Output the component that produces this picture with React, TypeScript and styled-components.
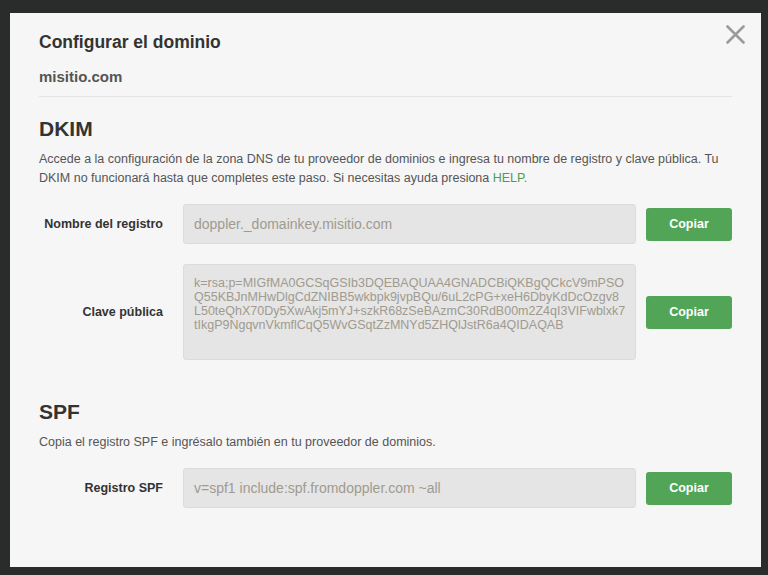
import React from 'react';
import styled, { createGlobalStyle } from 'styled-components';

interface TField {
  label: string;
  lines: string[];
  multiline?: boolean;
}

interface SFieldValueProps {
  $multiline?: boolean;
}

const dkimFields: TField[] = [
  { label: 'Nombre del registro', lines: ['doppler._domainkey.misitio.com'] },
  {
    label: 'Clave pública',
    multiline: true,
    lines: [
      'k=rsa;p=MIGfMA0GCSqGSIb3DQEBAQUAA4GNADCBiQKBgQCkcV9mPSO',
      'Q55KBJnMHwDlgCdZNIBB5wkbpk9jvpBQu/6uL2cPG+xeH6DbyKdDcOzgv8',
      'L50teQhX70Dy5XwAkj5mYJ+szkR68zSeBAzmC30RdB00m2Z4qI3VIFwblxk7',
      'tIkgP9NgqvnVkmflCqQ5WvGSqtZzMNYd5ZHQlJstR6a4QIDAQAB'
    ]
  }
];

const spfFields: TField[] = [
  { label: 'Registro SPF', lines: ['v=spf1 include:spf.fromdoppler.com ~all'] }
];

const FieldRow = ({ field }: { field: TField }) => (
  <SRow>
    <SLabel>{field.label}</SLabel>
    <SFieldValue $multiline={field.multiline}>
      {field.lines.map((line) => (
        <div key={line}>{line}</div>
      ))}
    </SFieldValue>
    <SCopyButton type="button">Copiar</SCopyButton>
  </SRow>
);

const App = () => {
  return (
    <>
      <GlobalStyle />
      <SOverlay>
        <SModal>
          <SClose type="button" aria-label="Cerrar">
            <svg width="19" height="19" viewBox="0 0 19 19">
              <path d="M1.5 1.5 L17.5 17.5 M17.5 1.5 L1.5 17.5" stroke="#9b9b9b" strokeWidth="2.6" strokeLinecap="round" />
            </svg>
          </SClose>

          <STitle>Configurar el dominio</STitle>
          <SDomain>misitio.com</SDomain>
          <SDivider />

          <SSection>
            <SSectionTitle>DKIM</SSectionTitle>
            <SDescription>
              Accede a la configuración de la zona DNS de tu proveedor de dominios e ingresa tu nombre de
              registro y clave pública. Tu DKIM no funcionará hasta que completes este paso. Si necesitas ayuda
              presiona <SHelp href="#">HELP.</SHelp>
            </SDescription>
            {dkimFields.map((field) => (
              <FieldRow key={field.label} field={field} />
            ))}
          </SSection>

          <SSection>
            <SSectionTitle>SPF</SSectionTitle>
            <SDescription>Copia el registro SPF e ingrésalo también en tu proveedor de dominios.</SDescription>
            {spfFields.map((field) => (
              <FieldRow key={field.label} field={field} />
            ))}
          </SSection>
        </SModal>
      </SOverlay>
    </>
  );
};

export default App;

const GlobalStyle = createGlobalStyle`
  html, body {
    margin: 0;
    padding: 0;
    background: #2a2b2b;
  }
  body {
    font-family: "Liberation Sans", Arial, Helvetica, sans-serif;
  }
`;

const SOverlay = styled.div`
  width: 768px;
  height: 575px;
  box-sizing: border-box;
  padding: 13px 7px 8px 10px;
  background: #2a2b2b;
  overflow: hidden;
`;

const SModal = styled.div`
  position: relative;
  width: 751px;
  height: 554px;
  box-sizing: border-box;
  padding: 19px 29px 0;
  background: #f6f6f6;
  display: flex;
  flex-direction: column;
`;

const SClose = styled.button`
  position: absolute;
  top: 12px;
  right: 16px;
  width: 19px;
  height: 19px;
  padding: 0;
  border: none;
  background: none;
  cursor: pointer;
  svg {
    display: block;
  }
`;

const STitle = styled.h2`
  margin: 0;
  font-size: 17.5px;
  line-height: 20px;
  font-weight: bold;
  color: #333;
`;

const SDomain = styled.div`
  margin-top: 16px;
  font-size: 15px;
  line-height: 18px;
  font-weight: bold;
  color: #555;
`;

const SDivider = styled.div`
  margin-top: 10px;
  height: 1px;
  background: #e4e4e4;
`;

const SSection = styled.section`
  display: flex;
  flex-direction: column;
  margin-top: 20px;
  & + & {
    margin-top: 40px;
  }
`;

const SSectionTitle = styled.h3`
  margin: 0;
  font-size: 21px;
  line-height: 24px;
  font-weight: bold;
  color: #333;
`;

const SDescription = styled.p`
  margin: 9px 0 16px;
  font-size: 12.5px;
  line-height: 19px;
  color: #555;
`;

const SHelp = styled.a`
  color: #4a9e4f;
  text-decoration: none;
`;

const SRow = styled.div`
  display: flex;
  align-items: center;
  & + & {
    margin-top: 20px;
  }
`;

const SLabel = styled.div`
  width: 124px;
  margin-right: 20px;
  text-align: right;
  font-size: 12.5px;
  font-weight: bold;
  color: #333;
`;

const SFieldValue = styled.div<SFieldValueProps>`
  flex: 1;
  box-sizing: border-box;
  height: ${(props) => (props.$multiline ? '96px' : '40px')};
  padding: ${(props) => (props.$multiline ? '11px 10px' : '0 10px')};
  display: flex;
  flex-direction: column;
  justify-content: ${(props) => (props.$multiline ? 'flex-start' : 'center')};
  background: #e5e5e5;
  border: 1px solid #dcdcdc;
  border-radius: 3px;
  color: #a09a8f;
  font-size: ${(props) => (props.$multiline ? '12.5px' : '14px')};
  line-height: ${(props) => (props.$multiline ? '14px' : '18px')};
  white-space: nowrap;
  overflow: hidden;
`;

const SCopyButton = styled.button`
  width: 86px;
  height: 33px;
  margin-left: 10px;
  padding: 0;
  border: none;
  border-radius: 3px;
  background: #52a556;
  color: #fff;
  font-family: inherit;
  font-size: 12.5px;
  font-weight: bold;
  cursor: pointer;
`;
